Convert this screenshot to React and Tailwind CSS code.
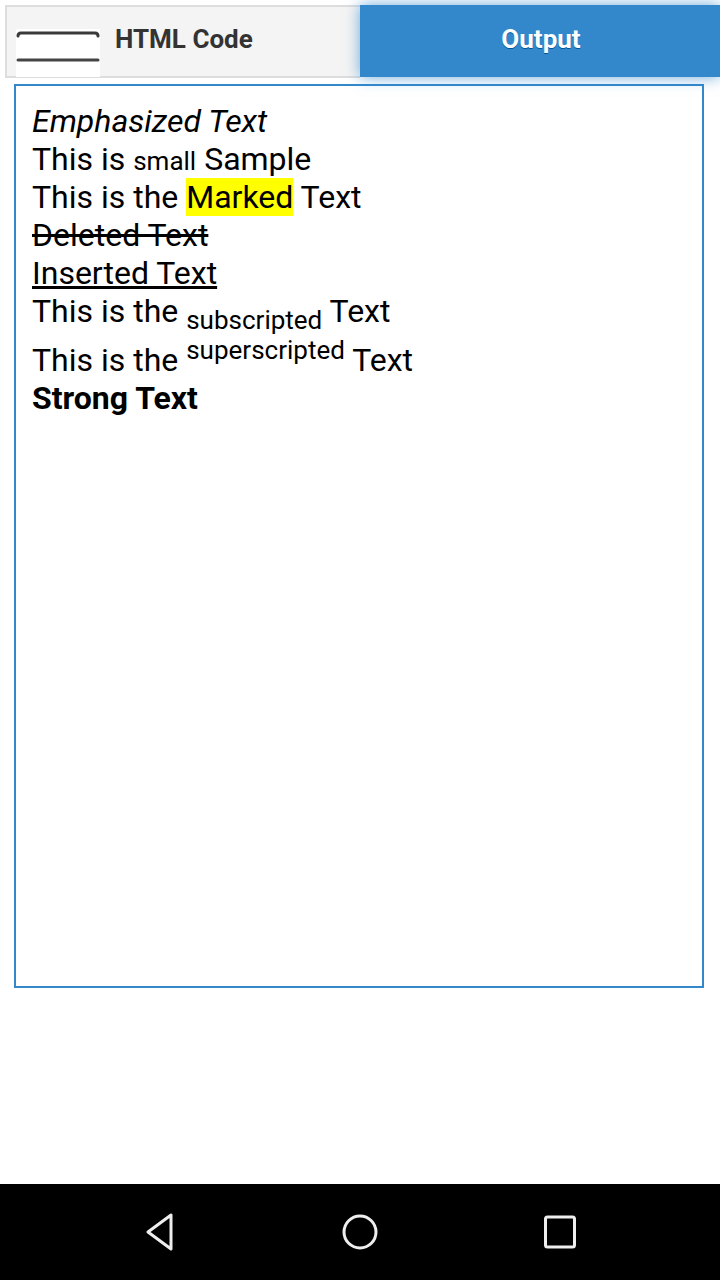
export default function App() {
  return (
    <div
      className="relative h-[1280px] w-[720px] overflow-hidden bg-white"
      style={{ fontFamily: "Roboto, 'Liberation Sans', sans-serif" }}
    >
      {/* Top toolbar */}
      <div className="flex h-[78px] pl-[5px] pt-[5px]">
        <div className="flex h-[73px] w-[355px] items-center border-2 border-r-0 border-[#dddddd] bg-[#f4f4f4]">
          <div className="ml-[9px] mt-[23px] h-[48px] w-[84px] bg-white">
            <svg width="84" height="48" viewBox="0 0 84 48">
              <path
                d="M2 7 Q2 4 5 4 L79 4 Q82 4 82 7"
                fill="none"
                stroke="#3a3a3a"
                strokeWidth="3"
                strokeLinecap="round"
              />
              <path
                d="M2 31 L82 31"
                stroke="#444444"
                strokeWidth="3"
                strokeLinecap="round"
              />
            </svg>
          </div>
          <span className="mb-[4px] ml-[15px] text-[26px] font-bold text-[#333333]">
            HTML Code
          </span>
        </div>
        <div className="z-10 flex h-[72px] flex-1 items-center justify-center bg-[#3388cc] shadow-[0_0_14px_rgba(51,136,204,0.7)]">
          <span className="mb-[4px] ml-[2px] text-[26px] font-bold text-white [text-shadow:0_1px_0_#005599]">
            Output
          </span>
        </div>
      </div>

      {/* Output frame */}
      <div className="ml-[14px] mr-[16px] mt-[6px] h-[904px] border-2 border-[#3388cc] px-[16px] pt-[16px] text-[32px] leading-[normal] text-black">
        <div>
          <em>Emphasized Text</em>
        </div>
        <div>
          This is <small className="text-[26px]">small</small> Sample
        </div>
        <div>
          This is the <mark className="bg-[#ffff00] text-black">Marked</mark>{" "}
          Text
        </div>
        <div>
          <del>Deleted Text</del>
        </div>
        <div>
          <ins>Inserted Text</ins>
        </div>
        <div>
          This is the{" "}
          <span className="align-sub text-[26px] leading-[normal]">
            subscripted
          </span>{" "}
          Text
        </div>
        <div>
          This is the{" "}
          <span className="align-super text-[26px] leading-[normal]">
            superscripted
          </span>{" "}
          Text
        </div>
        <div>
          <strong className="font-bold">Strong Text</strong>
        </div>
      </div>

      {/* Android navigation bar */}
      <div className="absolute bottom-0 left-0 flex h-[96px] w-[720px] items-center justify-center bg-black">
        <div className="flex w-[440px] items-center justify-between">
          <svg width="40" height="40" viewBox="0 0 40 40">
            <path
              d="M31 3 L31 37 L8 20 Z"
              fill="none"
              stroke="#eeeeee"
              strokeWidth="3"
              strokeLinejoin="round"
            />
          </svg>
          <svg width="40" height="40" viewBox="0 0 40 40">
            <circle cx="20" cy="20" r="16" fill="none" stroke="#eeeeee" strokeWidth="3" />
          </svg>
          <svg width="40" height="40" viewBox="0 0 40 40">
            <rect
              x="5.5"
              y="5"
              width="29"
              height="30"
              rx="2"
              fill="none"
              stroke="#eeeeee"
              strokeWidth="3"
            />
          </svg>
        </div>
      </div>
    </div>
  );
}
